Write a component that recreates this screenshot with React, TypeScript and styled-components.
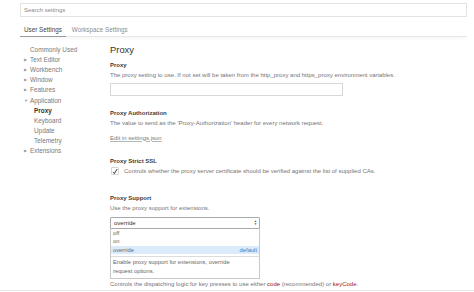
import React from 'react'
import styled, { createGlobalStyle } from 'styled-components'

const GlobalStyle = createGlobalStyle`
  html, body {
    margin: 0;
    padding: 0;
    background: #ffffff;
    font-family: "Liberation Sans", Arial, sans-serif;
    color: #6f6f6f;
  }
  body {
    width: 474px;
    height: 292px;
    overflow: hidden;
  }
`

const Page = styled.div`
  display: flex;
  flex-direction: column;
  padding: 3px 7px 0 20px;
  height: 292px;
  box-sizing: border-box;
  position: relative;
`

const SearchBox = styled.div`
  height: 14px;
  box-sizing: border-box;
  border: 1px solid #e3e3e3;
  padding: 0 3px;
  font-size: 6px;
  line-height: 12px;
  color: #8a8a8a;
`

const Tabs = styled.div`
  display: flex;
  gap: 2px;
  border-bottom: 1px solid #e6e6e6;
  box-shadow: 0 4px 4px -3px rgba(0, 0, 0, 0.05);
`

const Tab = styled.div<{ $active?: boolean }>`
  padding: 9px 4px 2px;
  line-height: 8px;
  font-size: 6.3px;
  color: ${(p) => (p.$active ? '#444' : '#8c8c8c')};
  border-bottom: 1px solid ${(p) => (p.$active ? '#9a9a9a' : 'transparent')};
  margin-bottom: -1px;
`

const Body = styled.div`
  display: grid;
  grid-template-columns: 90px 1fr;
  flex: 1;
`

const Sidebar = styled.div`
  padding-top: 7px;
  display: flex;
  flex-direction: column;
`

const NavItem = styled.div<{ $depth: number; $active?: boolean }>`
  display: flex;
  align-items: center;
  height: 10.2px;
  padding-left: ${(p) => (p.$depth === 0 ? 10 : 14)}px;
  font-size: 6.4px;
  color: ${(p) => (p.$active ? '#333' : '#7a7a7a')};
  font-weight: ${(p) => (p.$active ? 700 : 400)};
  position: relative;
`

const Twisty = styled.span`
  position: absolute;
  left: 4px;
  font-size: 4px;
  color: #9a9a9a;
`

const Main = styled.div`
  padding-top: 7px;
  display: flex;
  flex-direction: column;
`

const Heading = styled.div`
  font-size: 9.4px;
  line-height: 12px;
  color: #333;
  margin-bottom: 4.5px;
`

const Label = styled.div<{ $gap?: number }>`
  font-size: 6px;
  line-height: 9px;
  font-weight: 700;
  color: #3d3d3d;
  margin-top: ${(p) => p.$gap ?? 0}px;
`

const Desc = styled.div`
  font-size: 6px;
  line-height: 10px;
  color: #757575;
`

const TextInput = styled.div`
  width: 233px;
  height: 13px;
  box-sizing: border-box;
  border: 1px solid #d8d8d8;
  margin-top: 3px;
`

const Link = styled.div`
  font-size: 6px;
  line-height: 10px;
  color: #7a7a7a;
  text-decoration: underline;
  text-decoration-color: #b5b5b5;
  margin-top: 5px;
`

const CheckRow = styled.div`
  display: flex;
  align-items: center;
  gap: 5px;
  height: 10px;
  font-size: 6px;
  color: #757575;
`

const CheckBox = styled.div`
  width: 8px;
  height: 8px;
  box-sizing: border-box;
  border: 1px solid #d6d6d6;
  border-radius: 1px;
  display: flex;
  align-items: center;
  justify-content: center;
  margin-left: 1px;
`

const Select = styled.div`
  width: 150px;
  height: 12px;
  box-sizing: border-box;
  border: 1px solid #a9a9a9;
  border-radius: 1px;
  margin-top: 3.5px;
  display: flex;
  align-items: center;
  justify-content: space-between;
  padding: 0 2px 0 3px;
  font-size: 6px;
  color: #333;
`

const Arrows = styled.span`
  display: flex;
  flex-direction: column;
  align-items: center;
  font-size: 3px;
  line-height: 3px;
  color: #444;
`

const Dropdown = styled.div`
  width: 150px;
  box-sizing: border-box;
  border: 1px solid #c8c8c8;
  border-top: none;
  background: #fff;
  padding-bottom: 2px;
`

const Option = styled.div<{ $selected?: boolean }>`
  display: flex;
  justify-content: space-between;
  height: 8.5px;
  line-height: 8.5px;
  padding: 0 2px 0 2px;
  font-size: 5.8px;
  color: #666;
  background: ${(p) => (p.$selected ? '#dcebfb' : 'transparent')};
`

const DefaultTag = styled.span`
  color: #3f7cc0;
`

const OptionHelp = styled.div`
  border-top: 1px solid #dcdcdc;
  margin-top: 1.5px;
  padding: 1px 2px 0;
  font-size: 5.8px;
  line-height: 9px;
  color: #666;
`

const Code = styled.span`
  color: #a31515;
`

const Footer = styled.div`
  position: absolute;
  left: 0;
  right: 0;
  bottom: 1px;
  border-top: 1px solid #e6e6e6;
`

const nav: { label: string; depth: number; twisty?: string; active?: boolean }[] = [
  { label: 'Commonly Used', depth: 0 },
  { label: 'Text Editor', depth: 0, twisty: '▶' },
  { label: 'Workbench', depth: 0, twisty: '▶' },
  { label: 'Window', depth: 0, twisty: '▶' },
  { label: 'Features', depth: 0, twisty: '▶' },
  { label: 'Application', depth: 0, twisty: '▼' },
  { label: 'Proxy', depth: 1, active: true },
  { label: 'Keyboard', depth: 1 },
  { label: 'Update', depth: 1 },
  { label: 'Telemetry', depth: 1 },
  { label: 'Extensions', depth: 0, twisty: '▶' },
]

export default function App() {
  return (
    <>
      <GlobalStyle />
      <Page>
        <SearchBox>Search settings</SearchBox>
        <Tabs>
          <Tab $active>User Settings</Tab>
          <Tab>Workspace Settings</Tab>
        </Tabs>
        <Body>
          <Sidebar>
            {nav.map((item) => (
              <NavItem key={item.label} $depth={item.depth} $active={item.active}>
                {item.twisty && <Twisty>{item.twisty}</Twisty>}
                {item.label}
              </NavItem>
            ))}
          </Sidebar>
          <Main>
            <Heading>Proxy</Heading>

            <Label>Proxy</Label>
            <Desc>The proxy setting to use. If not set will be taken from the http_proxy and https_proxy environment variables.</Desc>
            <TextInput />

            <Label $gap={13}>Proxy Authorization</Label>
            <Desc>The value to send as the 'Proxy-Authorization' header for every network request.</Desc>
            <Link>Edit in settings.json</Link>

            <Label $gap={14.5}>Proxy Strict SSL</Label>
            <CheckRow>
              <CheckBox>
                <svg width="7" height="7" viewBox="0 0 10 10">
                  <path d="M2 5.5 L4 8.5 L8.5 1" fill="none" stroke="#222" strokeWidth="1.5" />
                </svg>
              </CheckBox>
              Controls whether the proxy server certificate should be verified against the list of supplied CAs.
            </CheckRow>

            <Label $gap={18}>Proxy Support</Label>
            <Desc>Use the proxy support for extensions.</Desc>
            <Select>
              override
              <Arrows>
                <span>▲</span>
                <span>▼</span>
              </Arrows>
            </Select>
            <Dropdown>
              <Option>off</Option>
              <Option>on</Option>
              <Option $selected>
                override <DefaultTag>default</DefaultTag>
              </Option>
              <OptionHelp>
                Enable proxy support for extensions, override
                <br />
                request options.
              </OptionHelp>
            </Dropdown>
            <Desc>
              Controls the dispatching logic for key presses to use either <Code>code</Code> (recommended) or{' '}
              <Code>keyCode</Code>.
            </Desc>
          </Main>
        </Body>
        <Footer />
      </Page>
    </>
  )
}
